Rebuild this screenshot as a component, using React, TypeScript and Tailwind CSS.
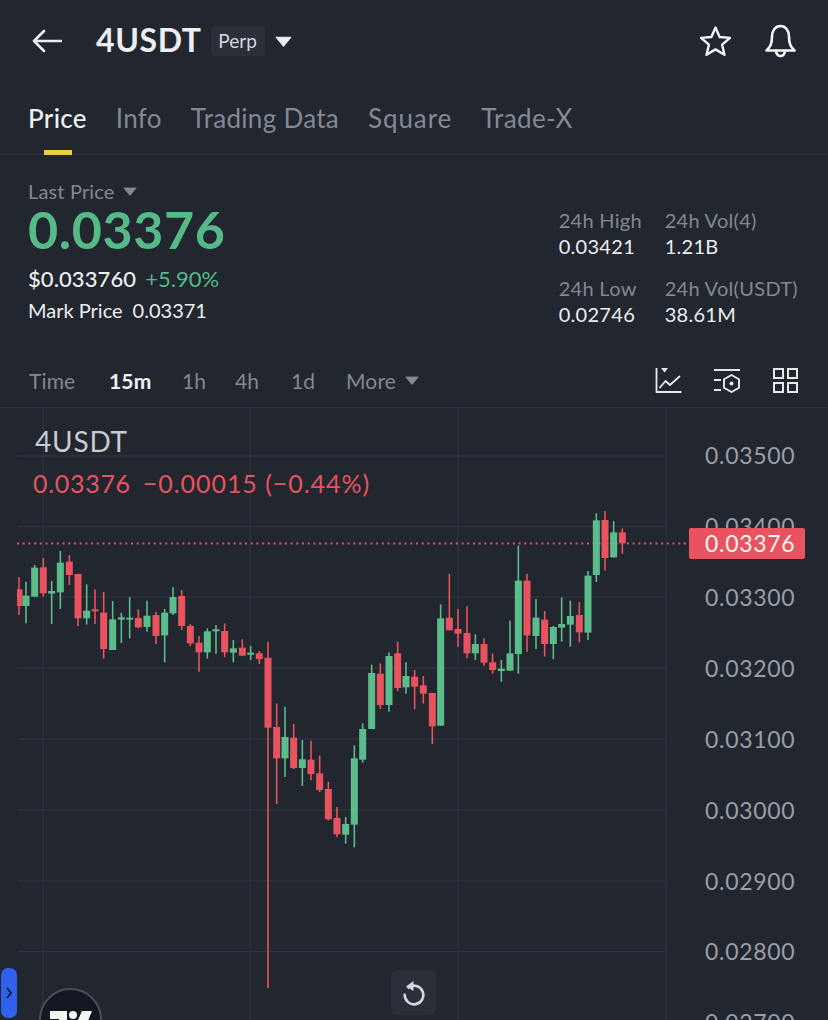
const GREEN = "#5bbd8b";
const RED = "#e9525f";

type C = [number, number, number, number, number, number];
type Group = { ox: number; oy: number; data: C[] };
// [x, high, bodyTop, bodyBottom, low, up(1)/down(0)]
const groups: Group[] = [
  {
    ox: 0,
    oy: 530,
    data: [
      [57, 142, 178, 228, 255, 0],
      [78, 155, 197, 228, 280, 1],
      [104, 105, 113, 200, 200, 1],
      [130, 84, 112, 190, 200, 0],
      [155, 153, 183, 191, 282, 1],
      [181, 63, 98, 187, 237, 1],
      [208, 75, 95, 135, 165, 0],
      [234, 131, 132, 265, 288, 0],
      [260, 163, 242, 265, 284, 1],
      [285, 178, 238, 244, 282, 0],
      [311, 186, 248, 357, 386, 0],
      [338, 213, 268, 360, 360, 1],
      [364, 248, 262, 269, 339, 1],
      [389, 201, 263, 269, 325, 1],
      [415, 238, 264, 292, 295, 0],
      [441, 212, 257, 291, 305, 1],
      [468, 246, 255, 318, 342, 0],
      [494, 237, 248, 316, 397, 1],
      [519, 172, 201, 250, 255, 1],
      [545, 180, 198, 288, 300, 0],
      [571, 282, 288, 340, 348, 0],
      [597, 318, 338, 367, 425, 0],
      [622, 295, 304, 367, 386, 1],
      [648, 285, 298, 304, 371, 1],
      [674, 280, 303, 367, 381, 0],
    ],
  },
  {
    ox: 230,
    oy: 630,
    data: [
      [10, 30, 55, 68, 97, 1],
      [37, 28, 53, 77, 78, 0],
      [62, 48, 68, 74, 90, 1],
      [88, 63, 70, 87, 102, 0],
      [114, 35, 83, 293, 1074, 0],
      [140, 220, 291, 385, 522, 0],
      [165, 230, 321, 385, 441, 1],
      [191, 282, 323, 414, 417, 0],
      [217, 330, 388, 414, 468, 1],
      [243, 332, 389, 432, 451, 0],
      [269, 377, 430, 480, 486, 0],
      [295, 455, 477, 568, 572, 0],
      [321, 531, 564, 613, 621, 0],
      [347, 561, 582, 614, 641, 1],
      [373, 346, 385, 584, 652, 1],
      [398, 280, 297, 389, 398, 1],
      [425, 104, 129, 297, 297, 1],
      [451, 100, 131, 225, 237, 0],
      [477, 67, 78, 225, 245, 1],
      [503, 35, 70, 174, 183, 0],
      [528, 97, 138, 172, 191, 1],
      [554, 120, 140, 170, 238, 0],
      [580, 138, 166, 191, 221, 0],
      [607, 189, 189, 289, 342, 0],
      [632, -77, -35, 287, 287, 1],
    ],
  },
  {
    ox: 420,
    oy: 500,
    data: [
      [88, 222, 353, 391, 391, 0],
      [114, 327, 387, 401, 440, 0],
      [141, 319, 399, 460, 475, 0],
      [166, 403, 432, 460, 480, 1],
      [192, 415, 432, 488, 497, 0],
      [218, 460, 487, 510, 521, 0],
      [244, 480, 506, 513, 545, 1],
      [270, 362, 460, 512, 513, 1],
      [295, 137, 242, 462, 521, 1],
      [321, 222, 242, 406, 455, 0],
      [348, 297, 353, 408, 447, 1],
      [374, 333, 359, 432, 470, 0],
      [400, 378, 381, 432, 478, 1],
      [425, 293, 372, 383, 425, 1],
      [451, 302, 348, 374, 440, 1],
      [478, 306, 345, 397, 427, 0],
      [504, 213, 227, 398, 420, 1],
      [529, 40, 61, 225, 246, 1],
      [555, 33, 60, 174, 212, 0],
      [581, 63, 97, 172, 173, 1],
      [607, 85, 97, 130, 161, 0],
    ],
  },
];

const gridY = [456, 526.5, 597, 668, 739, 810, 881, 951.5];
const gridX = [43, 250, 458, 666];
const axis = ["0.03500", "0.03400", "0.03300", "0.03200", "0.03100", "0.03000", "0.02900", "0.02800", "0.02700"];
const tabs = [
  { t: "Price", c: "" },
  { t: "Info", c: "" },
  { t: "Trading Data", c: "" },
  { t: "Square", c: "tracking-[0.9px]" },
  { t: "Trade-X", c: "tracking-[0.4px]" },
];

function Chart() {
  return (
    <svg className="absolute inset-0" width={828} height={612} viewBox="0 408 828 612">
      <defs>
        <clipPath id="plot">
          <rect x={17} y={408} width={672} height={612} />
        </clipPath>
      </defs>
      {gridY.map((y) => (
        <line key={y} x1={18} x2={666} y1={y} y2={y} stroke="#2d323c" strokeWidth={1.5} />
      ))}
      {gridX.map((x) => (
        <line key={x} x1={x} x2={x} y1={408} y2={1020} stroke="#2d323c" strokeWidth={1.5} />
      ))}
      <line x1={17} x2={689} y1={543.5} y2={543.5} stroke={RED} strokeWidth={2} strokeDasharray="2 3.7" />
      <g clipPath="url(#plot)">
        {groups.map((g) =>
          g.data.map(([x, h, t, b, l, up]) => {
            const cx = g.ox + x / 3;
            const col = up ? GREEN : RED;
            return (
              <g key={`${g.ox}-${x}`}>
                <line x1={cx} x2={cx} y1={g.oy + h / 3} y2={g.oy + l / 3} stroke={col} strokeWidth={1.6} />
                <rect x={cx - 3.5} y={g.oy + t / 3} width={7} height={Math.max(2, (b - t) / 3)} fill={col} />
              </g>
            );
          }),
        )}
      </g>
    </svg>
  );
}

function Caret({ w, h, c }: { w: number; h: number; c: string }) {
  return (
    <svg width={w} height={h} viewBox="0 0 16 10" className="shrink-0">
      <path d="M1 1h14L8 9.500z" fill={c} stroke={c} strokeWidth={1} strokeLinejoin="round" />
    </svg>
  );
}

function Stat({ label, value }: { label: string; value: string }) {
  return (
    <div className="flex flex-col tracking-[0.3px]">
      <span className="text-[20px] leading-[26px] text-[#84888f]">{label}</span>
      <span className="text-[20px] leading-[26px] text-[#eceef0]">{value}</span>
    </div>
  );
}

export default function App() {
  return (
    <div
      className="flex h-[1020px] w-[828px] flex-col overflow-hidden bg-[#21262f] text-[#eaecef]"
      style={{ fontFamily: '"Lato", "Liberation Sans", sans-serif' }}
    >
      {/* Header */}
      <div className="flex h-[82px] shrink-0 items-center pl-[32px] pr-[31px]">
        <svg width={30} height={24} viewBox="0 0 30 24" fill="none" stroke="#eceef0" strokeWidth={2.6} strokeLinecap="round" strokeLinejoin="round">
          <path d="M2 12h27M12 2 2 12l10 10" />
        </svg>
        <span className="ml-[34px] mt-[-2px] text-[32px] font-bold leading-none tracking-[0.6px] text-[#eceef0]">4USDT</span>
        <span className="ml-[9px] flex h-[30px] w-[54px] items-center justify-center rounded-[3px] bg-[#2a2f39] text-[19px] text-[#d6d8dc]">Perp</span>
        <span className="ml-[10px]">
          <Caret w={17} h={11} c="#eceef0" />
        </span>
        <div className="ml-auto flex items-center gap-[32px]">
          <svg width={33} height={32} viewBox="0 0 33 32" fill="none" stroke="#f4f5f6" strokeWidth={2.4} strokeLinejoin="round">
            <path d="M16.500 2.500 20.600 12l10.400.900-7.900 6.800 2.400 10.100-9-5.400-9 5.400 2.400-10.100L2 12.900 12.400 12z" />
          </svg>
          <svg width={33} height={34} viewBox="0 0 33 34" fill="none" stroke="#f4f5f6" strokeWidth={2.6} strokeLinejoin="round" strokeLinecap="round">
            <path d="M8 12.500C8 6.500 11.500 2 16.500 2S25 6.500 25 12.500c0 8 2 10.500 5.500 14h-28C6 23 8 20.500 8 12.500Z" />
            <path d="M12 27c.5 3.500 2.500 5 4.500 5s4-1.500 4.500-5" />
          </svg>
        </div>
      </div>

      {/* Tabs */}
      <div className="flex h-[73px] shrink-0 gap-[29px] border-b-[1.5px] border-[#2d323c] pl-[28px] text-[26px] tracking-[0.3px]">
        {tabs.map(({ t, c }, i) => (
          <div key={t} className={`relative flex h-[73px] items-start pt-[20px] ${c}`}>
            <span className={`leading-[32px] ${i === 0 ? "font-medium text-[#eef0f2]" : "text-[#848993]"}`}>{t}</span>
            {i === 0 && <span className="absolute bottom-0 left-[16px] h-[5px] w-[28px] bg-[#f0cb45]" />}
          </div>
        ))}
      </div>

      {/* Stats */}
      <div className="flex h-[199px] shrink-0 justify-between pl-[28px] pr-[29px]">
        <div className="flex flex-col pt-[23px]">
          <div className="flex items-center gap-[8px] text-[20px] leading-[26px] tracking-[0.15px] text-[#84888f]">
            Last Price
            <Caret w={14} h={9} c="#84888f" />
          </div>
          <div className="mt-[-3px] text-[52px] font-bold leading-[56px] tracking-[0.6px] text-[#55ba88]">0.03376</div>
          <div className="mt-[8px] flex gap-[9px] text-[22px] leading-[28px]">
            <span className="font-medium tracking-[0.1px] text-[#f0f1f3]">$0.033760</span>
            <span className="text-[#55ba88]">+5.90%</span>
          </div>
          <div className="mt-[4px] flex gap-[10px] text-[20px] leading-[26px] text-[#eceef0]">
            <span>Mark Price</span>
            <span>0.03371</span>
          </div>
        </div>
        <div className="mr-[1px] grid grid-cols-[106px_auto] content-start gap-y-[16px] pt-[52px]">
          <Stat label="24h High" value="0.03421" />
          <Stat label="24h Vol(4)" value="1.21B" />
          <Stat label="24h Low" value="0.02746" />
          <Stat label="24h Vol(USDT)" value="38.61M" />
        </div>
      </div>

      {/* Interval row */}
      <div className="flex h-[54px] shrink-0 items-center border-b-[1.5px] border-[#2d323c] pl-[29px] pr-[30px] text-[21px] tracking-[0.15px] text-[#84888f]">
        <span className="w-[80px]">Time</span>
        <span className="w-[73px] font-bold text-[#f2f3f5]">15m</span>
        <span className="w-[53px]">1h</span>
        <span className="w-[56px]">4h</span>
        <span className="w-[55px]">1d</span>
        <span>More</span>
        <span className="ml-[9px]">
          <Caret w={14} h={9} c="#84888f" />
        </span>
        <div className="ml-auto flex items-center">
          <svg width={27} height={27} viewBox="0 0 27 27" fill="none" stroke="#e6e8ea" strokeWidth={1.8} strokeLinejoin="round">
            <path d="M1.500 1v24h25" />
            <path d="M4.500 21l6-7 4.500 4 10-9" />
            <path d="M6 1h7L9.500 5.500z" fill="#e6e8ea" stroke="none" />
          </svg>
          <svg className="ml-[31px]" width={27} height={25} viewBox="0 0 27 25" fill="none" stroke="#e6e8ea" strokeWidth={1.9}>
            <path d="M1 2h26M1 12h7M1 22h7" />
            <path d="M18.500 7l7.500 4.300v8.400l-7.500 4.300-7.500-4.300v-8.400z" />
            <circle cx={18.500} cy={15.500} r={2} fill="#e6e8ea" stroke="none" />
          </svg>
          <svg className="ml-[33px]" width={25} height={25} viewBox="0 0 25 25" fill="none" stroke="#e6e8ea" strokeWidth={2}>
            <rect x={1} y={1} width={9} height={9} />
            <rect x={15} y={1} width={9} height={9} />
            <rect x={1} y={15} width={9} height={9} />
            <rect x={15} y={15} width={9} height={9} />
          </svg>
        </div>
      </div>

      {/* Chart */}
      <div className="relative min-h-0 flex-1 overflow-hidden">
        <Chart />
        <div className="relative pl-[33px] pt-[16px]">
          <div className="pl-[2px] text-[28px] leading-[34px] tracking-[0.8px] text-[#c9ccd1]">4USDT</div>
          <div className="mt-[9px] flex text-[25px] leading-[32px] tracking-[0.7px] text-[#e9525f]">
            <span>0.03376</span>
            <span className="ml-[12px] tracking-[0.95px]">−0.00015 (−0.44%)</span>
          </div>
        </div>
        {/* price axis */}
        <div className="absolute left-[705px] top-[12px] flex flex-col text-[23px] tracking-[0.7px] text-[#9a9ea6]">
          {axis.map((a) => (
            <div key={a} className="flex h-[70.900px] items-center">
              {a}
            </div>
          ))}
        </div>
        {/* Last price tag */}
        <div className="absolute left-[689px] top-[120px] flex h-[31px] w-[116px] items-center rounded-[2px] bg-[#e9525f] pl-[16px] text-[23px] tracking-[0.7px] text-[#f5f5f5]">
          0.03376
        </div>
        {/* Side handle */}
        <div className="absolute left-[1px] top-[560px] flex h-[50px] w-[16px] items-center justify-center rounded-[7px] bg-[#2f61ee]">
          <svg width={8} height={14} viewBox="0 0 8 14" fill="none" stroke="#171b25" strokeWidth={1.800}>
            <path d="M2 2l4 5-4 5" />
          </svg>
        </div>
        {/* TradingView logo */}
        <div className="absolute left-[39px] top-[580px] flex h-[63px] w-[63px] justify-center rounded-full border-2 border-[#4b4e56] bg-[#131722]">
          <svg width={42} height={24} viewBox="0 0 42 24" className="mt-[21px]" fill="#f4f4f5">
            <path d="M0 0h17v19H9V8H0z" />
            <circle cx={23} cy={4} r={4} />
            <path d="M32 0h10l-9 22H22z" />
          </svg>
        </div>
        {/* Reset */}
        <div className="absolute left-[391px] top-[562px] flex h-[45px] w-[45px] items-center justify-center rounded-[7px] bg-[#2b2f3a]">
          <svg width={24} height={26} viewBox="0 0 24 26" fill="none" stroke="#d5d7dc" strokeWidth={2.600}>
            <path d="M6.500 7.500A9.300 9.300 0 1 1 2.700 14.800" strokeLinecap="round" />
            <path d="M11.500 1v10L4 6.500z" fill="#d5d7dc" stroke="none" />
          </svg>
        </div>
      </div>
    </div>
  );
}
